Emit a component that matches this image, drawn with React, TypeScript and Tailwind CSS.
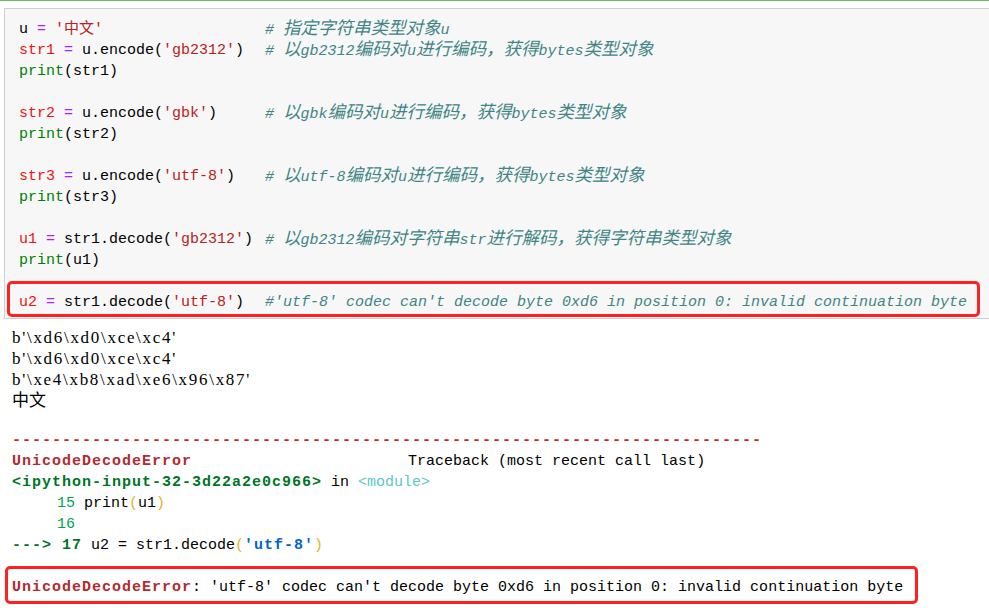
import React from 'react';

// CJK runs inside comments render wider than the mono latin text
const cjkRe = /([\u3000-\u303f\u4e00-\u9fff\uff00-\uffef]+)/;

const Comment = ({ text }: { text: string }) => (
  <span className="italic text-[#3f8585]">
    {text.split(cjkRe).map((part, i) =>
      i % 2 ? (
        <span key={i} className="text-[17.5px]">{part}</span>
      ) : (
        <React.Fragment key={i}>{part}</React.Fragment>
      )
    )}
  </span>
);

const Var = ({ children }: { children: React.ReactNode }) => <span className="text-[#f01010]">{children}</span>;
const Eq = () => <span className="text-[#aa22ff]">=</span>;
const Str = ({ children }: { children: React.ReactNode }) => <span className="text-[#ba2121]">{children}</span>;
const Print = () => <span className="text-[#008000]">print</span>;

const CodeLine = ({ code, comment }: { code: React.ReactNode; comment?: string }) => (
  <div className="h-[21px] leading-[21px] whitespace-pre flex">
    <span className="inline-block w-[246px] shrink-0">{code}</span>
    {comment && <Comment text={comment} />}
  </div>
);

const Blank = () => <div className="h-[21px]" />;

// bold ansi text is drawn 1px wider per glyph in the original
const B = ({ c, children }: { c: string; children: React.ReactNode }) => (
  <span className={`font-bold tracking-[1px] ${c}`}>{children}</span>
);

export default function App() {
  return (
    <div className="w-[989px] h-[611px] overflow-hidden bg-white text-black" style={{ fontFamily: '"Liberation Mono", "Noto Sans CJK SC", monospace' }}>
      <div className="h-px bg-[#66bb6a]" />

      {/* input cell */}
      <div className="mt-[7px] ml-[4px] -mr-4 border border-[#cfcfcf] bg-[#f7f7f7] pt-[10px] pb-[5px] pl-[14px] text-[15px]">
        <CodeLine code={<>u <Eq /> <Str>'中文'</Str></>} comment="# 指定字符串类型对象u" />
        <CodeLine code={<><Var>str1</Var> <Eq /> u.encode(<Str>'gb2312'</Str>)</>} comment="# 以gb2312编码对u进行编码，获得bytes类型对象" />
        <CodeLine code={<><Print />(str1)</>} />
        <Blank />
        <CodeLine code={<><Var>str2</Var> <Eq /> u.encode(<Str>'gbk'</Str>)</>} comment="# 以gbk编码对u进行编码，获得bytes类型对象" />
        <CodeLine code={<><Print />(str2)</>} />
        <Blank />
        <CodeLine code={<><Var>str3</Var> <Eq /> u.encode(<Str>'utf-8'</Str>)</>} comment="# 以utf-8编码对u进行编码，获得bytes类型对象" />
        <CodeLine code={<><Print />(str3)</>} />
        <Blank />
        <CodeLine code={<><Var>u1</Var> <Eq /> str1.decode(<Str>'gb2312'</Str>)</>} comment="# 以gb2312编码对字符串str进行解码，获得字符串类型对象" />
        <CodeLine code={<><Print />(u1)</>} />
        <Blank />
        <div className="relative">
          <CodeLine code={<><Var>u2</Var> <Eq /> str1.decode(<Str>'utf-8'</Str>)</>} comment="#'utf-8' codec can't decode byte 0xd6 in position 0: invalid continuation byte" />
          <div className="absolute left-[-12px] top-[-11px] w-[973px] h-[36px] border-[3px] border-[#ff2020] rounded-[5px]" />
        </div>
      </div>

      {/* stream output */}
      <div className="pl-[12px] pt-[8px] text-[17px] leading-[21px] tracking-[1.7px] whitespace-pre" style={{ fontFamily: '"Liberation Serif", "Noto Sans CJK SC", serif' }}>
        <div>b'\xd6\xd0\xce\xc4'</div>
        <div>b'\xd6\xd0\xce\xc4'</div>
        <div>b'\xe4\xb8\xad\xe6\x96\x87'</div>
        <div className="tracking-normal">中文</div>
      </div>

      {/* error output */}
      <div className="pl-[12px] pt-[19px] text-[15px] leading-[21px] whitespace-pre">
        <div><B c="text-[#b22b31]">{'-'.repeat(75)}</B></div>
        <div><B c="text-[#b22b31]">UnicodeDecodeError</B>{' '.repeat(24)}Traceback (most recent call last)</div>
        <div><B c="text-[#007427]">&lt;ipython-input-32-3d22a2e0c966&gt;</B> in <span className="text-[#60c6c8]">&lt;module&gt;</span></div>
        <div><span className="text-[#00a250]">     15</span> print<span className="text-[#ddb62b]">(</span>u1<span className="text-[#ddb62b]">)</span></div>
        <div><span className="text-[#00a250]">     16</span></div>
        <div><B c="text-[#007427]">---&gt; 17</B> u2 = str1.decode<span className="text-[#ddb62b]">(</span><B c="text-[#0065ca]">'utf-8'</B><span className="text-[#ddb62b]">)</span></div>
        <div className="h-[21px]" />
        <div className="relative">
          <B c="text-[#b22b31]">UnicodeDecodeError</B>: 'utf-8' codec can't decode byte 0xd6 in position 0: invalid continuation byte
          <div className="absolute left-[-7px] top-[-11px] w-[913px] h-[38px] border-[3px] border-[#ff2020] rounded-[5px]" />
        </div>
      </div>
    </div>
  );
}
